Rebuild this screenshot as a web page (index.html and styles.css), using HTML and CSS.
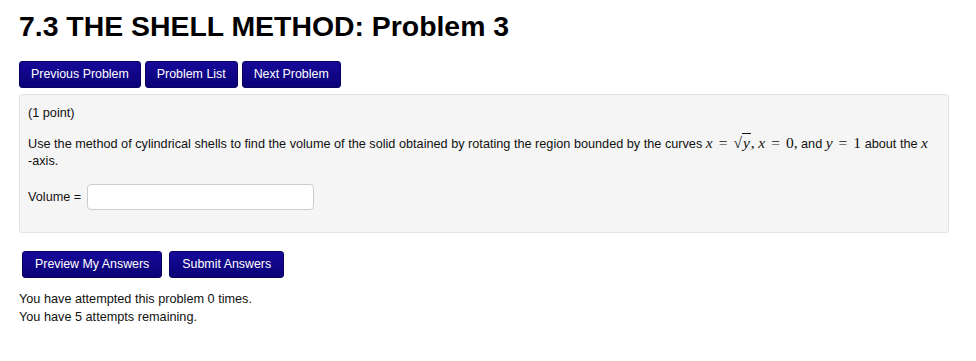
FILE: index.html
```html
<!DOCTYPE html>
<html>
<head>
<meta charset="utf-8">
<link rel="stylesheet" href="styles.css">
</head>
<body>
<div class="page">
  <h1 class="title">7.3 THE SHELL METHOD: Problem 3</h1>
  <div class="nav">
    <button class="btn">Previous Problem</button>
    <button class="btn">Problem List</button>
    <button class="btn">Next Problem</button>
  </div>
  <div class="well">
    <p class="points">(1 point)</p>
    <p class="question">Use the method of cylindrical shells to find the volume of the solid obtained by rotating the region bounded by the curves <span class="math"><i>x</i><span class="rel">=</span><span class="sqrt"><span class="rad">√</span><span class="radicand"><i>y</i></span></span>,</span> <span class="math"><i>x</i><span class="rel">=</span>0,</span> and <span class="math"><i>y</i><span class="rel">=</span>1</span> about the <span class="math"><i>x</i></span><br>-axis.</p>
    <div class="answer">
      <label class="label">Volume =</label>
      <input class="input" type="text">
    </div>
  </div>
  <div class="submit">
    <button class="btn btn-lg">Preview My Answers</button>
    <button class="btn btn-lg">Submit Answers</button>
  </div>
  <div class="attempts">
    <div>You have attempted this problem 0 times.</div>
    <div>You have 5 attempts remaining.</div>
  </div>
</div>
</body>
</html>
```
FILE: styles.css
```css
html, body {
  margin: 0;
  padding: 0;
  background: #fff;
}
body {
  font-family: "Liberation Sans", Arial, sans-serif;
  font-size: 12.7px;
  color: #111;
}
.page {
  padding: 0 27px 0 19px;
}
.title {
  margin: 0;
  padding-top: 10px;
  font-size: 28.4px;
  line-height: 32px;
  font-weight: bold;
  color: #000;
}
.nav {
  display: flex;
  gap: 4px;
  margin-top: 19px;
}
.btn {
  font-family: "Liberation Sans", Arial, sans-serif;
  font-size: 12.4px;
  color: #fff;
  background: linear-gradient(#16099a, #0a0276);
  border: 1px solid #080060;
  border-radius: 3px;
  height: 27px;
  padding: 0 11px;
  line-height: 25px;
  cursor: pointer;
}
.well {
  margin-top: 6px;
  background: #f5f5f5;
  border: 1px solid #e3e3e3;
  border-radius: 3px;
  padding: 9px 8px 22px 8px;
}
.points {
  margin: 0;
  line-height: 18px;
}
.question {
  margin: 12px 0 0 0;
  line-height: 17px;
}
.math {
  font-family: "Liberation Serif", "Times New Roman", serif;
  font-size: 15.5px;
}
.math i {
  font-style: italic;
}
.rel {
  margin: 0 6px;
}
.sqrt {
  display: inline-block;
}
.rad {
  font-style: normal;
}
.radicand {
  border-top: 1px solid #111;
  padding: 0 1px;
}
.answer {
  display: flex;
  align-items: center;
  gap: 6px;
  margin-top: 14px;
}
.input {
  width: 227px;
  height: 26px;
  box-sizing: border-box;
  border: 1px solid #ccc;
  border-radius: 4px;
  background: #fff;
  margin: 0;
}
.submit {
  display: flex;
  gap: 7px;
  margin-top: 18px;
  padding-left: 3px;
}
.btn-lg {
  padding: 0 12px;
}
.attempts {
  margin-top: 12px;
  line-height: 18px;
}
```
